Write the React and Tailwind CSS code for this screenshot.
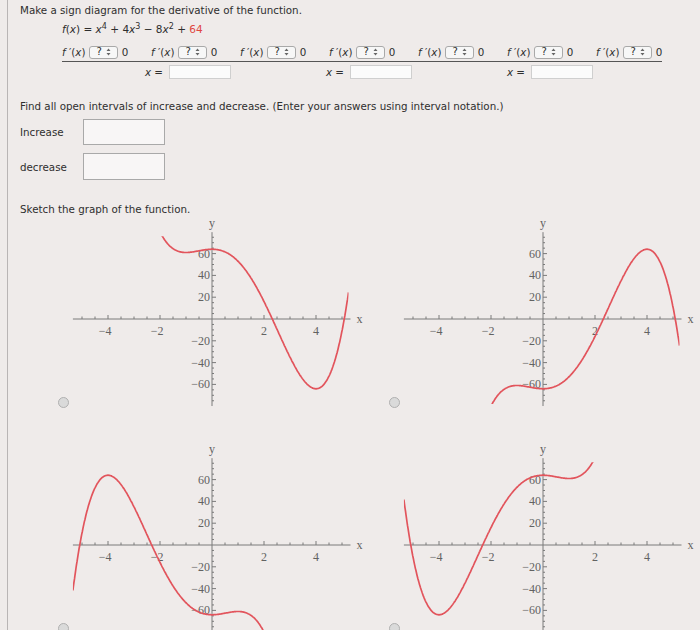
import React from "react";

const f = (x) => x ** 4 + 4 * x ** 3 - 8 * x ** 2 + 64;

// the four answer choices, in reading order
const GRAPHS = [(x) => f(-x), (x) => -f(-x), (x) => -f(x), (x) => f(x)];

const OX = 140;
const OY = 103;
const SX = 26;
const SY = 1.09;
const XMIN = -5.35;
const XMAX = 5.25;
const YMIN = -78;
const YMAX = 76;

const px = (x) => OX + x * SX;
const py = (y) => OY - y * SY;

function Graph({ fn, id }) {
  let d = "";
  for (let x = XMIN; x <= XMAX + 1e-9; x += 0.02) {
    d += (d ? "L" : "M") + px(x).toFixed(1) + " " + py(fn(x)).toFixed(1);
  }

  const xTicks = [];
  for (let i = -10; i <= 10; i++) {
    const k = i / 2;
    if (k === 0) continue;
    const len = i % 4 === 0 ? 4 : 2.5;
    xTicks.push(<line key={i} x1={px(k)} x2={px(k)} y1={OY} y2={OY - len} />);
  }

  const yTicks = [];
  for (let v = -75; v <= 75; v += 5) {
    if (v === 0) continue;
    const len = v % 20 === 0 ? 4 : 2;
    yTicks.push(<line key={v} x1={OX} x2={OX + len} y1={py(v)} y2={py(v)} />);
  }

  return (
    <svg width="300" height="195" className="block shrink-0">
      <defs>
        <clipPath id={id}>
          <rect x={px(XMIN)} y={py(YMAX)} width={(XMAX - XMIN) * SX} height={(YMAX - YMIN) * SY} />
        </clipPath>
      </defs>
      <g stroke="#7a7a7a" strokeWidth="1">
        <line x1={px(XMIN)} x2={px(XMAX) + 2} y1={OY} y2={OY} />
        <line x1={OX} x2={OX} y1={py(YMAX) - 4} y2={py(YMIN) + 2} />
        {xTicks}
        {yTicks}
      </g>
      <g fill="#626262" fontFamily="'Liberation Serif', serif" fontSize="12">
        <text x={OX} y="11" textAnchor="middle">y</text>
        <text x={px(XMAX) + 11} y={OY + 4} textAnchor="middle">x</text>
        {[-4, -2].map((k) => (
          <text key={k} x={px(k) + 3.5} y={OY + 16} textAnchor="end">−{Math.abs(k)}</text>
        ))}
        {[2, 4].map((k) => (
          <text key={k} x={px(k)} y={OY + 16} textAnchor="middle">{k}</text>
        ))}
        {[60, 40, 20, -20, -40, -60].map((v) => (
          <text key={v} x={OX - 2} y={py(v) + 4} textAnchor="end">
            {v < 0 ? "−" + Math.abs(v) : v}
          </text>
        ))}
      </g>
      <path d={d} fill="none" stroke="#e2545c" strokeWidth="1.7" clipPath={`url(#${id})`} />
    </svg>
  );
}

function Spinner() {
  return (
    <span className="inline-flex items-center gap-[4px] h-[13px] px-[6px] mx-[4px] border border-[#a9a9a9] rounded-[3px] bg-[#f7f7f7] text-[10px] not-italic">
      ?
      <svg width="5" height="8" viewBox="0 0 5 8">
        <path d="M2.5 0.5 L4.5 3 L0.5 3 Z M2.5 7.5 L4.5 5 L0.5 5 Z" fill="#666" />
      </svg>
    </span>
  );
}

function SignItem() {
  return (
    <div className="w-[89px] shrink-0 flex items-center">
      <span>
        <i>f</i> ′(<i>x</i>)
      </span>
      <Spinner />
      <span>0</span>
    </div>
  );
}

function XBox() {
  return (
    <div className="flex items-center gap-[6px]">
      <span>
        <i>x</i> =
      </span>
      <div className="w-[62px] h-[14px] border border-[#cfcfcf] bg-[#fbfbfb]" />
    </div>
  );
}

function Radio() {
  return <div className="w-[11px] h-[11px] mb-[3px] mr-[3px] rounded-full border border-[#b0b0b0] bg-[#dadada] shrink-0" />;
}

export default function App() {
  return (
    <div
      className="w-[700px] h-[630px] overflow-hidden bg-[#efebea] text-[#2e2e2e]"
      style={{ fontFamily: "'DejaVu Sans', Verdana, sans-serif" }}
    >
      <div className="ml-[7px] h-full border-l border-[#b9b5b5] pl-[12px] text-[10.3px] leading-[14px]">
        <p className="pt-[3px]">Make a sign diagram for the derivative of the function.</p>

        <p className="mt-[5px] ml-[42px] text-[10.5px]">
          <i>f</i>(<i>x</i>) = <i>x</i>
          <sup className="text-[8px]">4</sup> + 4<i>x</i>
          <sup className="text-[8px]">3</sup> − 8<i>x</i>
          <sup className="text-[8px]">2</sup> + <span className="text-[#e0473f]">64</span>
        </p>

        <div className="ml-[42px] w-[600px]">
          <div className="mt-[9px] flex h-[14px] items-center">
            {Array.from({ length: 7 }).map((_, i) => (
              <SignItem key={i} />
            ))}
          </div>
          <div className="mt-[2px] h-px bg-[#555]" />
          <div className="mt-[3px] flex gap-[95px] pl-[83px]">
            <XBox />
            <XBox />
            <XBox />
          </div>
        </div>

        <p className="mt-[20px]">
          Find all open intervals of increase and decrease. (Enter your answers using interval notation.)
        </p>

        <div className="mt-[6px] flex items-center">
          <span className="w-[63px]">Increase</span>
          <div className="w-[82px] h-[26px] border border-[#a9a9a9] bg-[#f8f6f6]" />
        </div>
        <div className="mt-[8px] flex items-center">
          <span className="w-[63px]">decrease</span>
          <div className="w-[82px] h-[27px] border border-[#a9a9a9] bg-[#f8f6f6]" />
        </div>

        <p className="mt-[22px]">Sketch the graph of the function.</p>

        <div className="ml-[38px] grid grid-cols-[331px_331px] gap-y-[31px]">
          {GRAPHS.map((fn, i) => (
            <div key={i} className="flex items-end">
              <Radio />
              <Graph fn={fn} id={`clip${i}`} />
            </div>
          ))}
        </div>
      </div>
    </div>
  );
}
